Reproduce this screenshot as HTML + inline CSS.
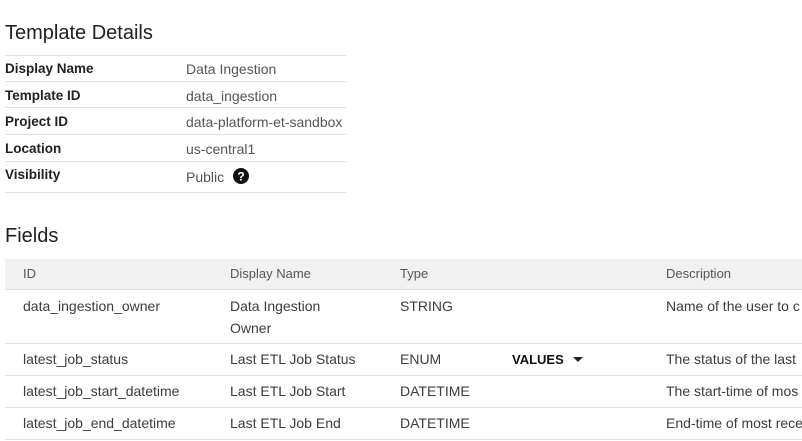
<!DOCTYPE html>
<html><head><style>
body{margin:0;width:802px;height:441px;overflow:hidden;background:#fff;font-family:"Liberation Sans",Arial,sans-serif;color:#212121;position:relative}
.a{position:absolute;white-space:nowrap}
h{position:absolute;font-size:20px;color:#212121}
.l{position:absolute;left:5px;width:341px;height:1px;background:#e0e0e0}
.k{font-size:13.5px;font-weight:bold;left:5px}
.v{font-size:14px;color:#555;left:186px}
.t{position:absolute;left:5px;width:797px;height:1px;background:#e0e0e0}
.c{font-size:14px;color:#3c3c3c}
.hd{font-size:13px;color:#555}
</style></head><body>
<h style="left:5px;top:22px">Template Details</h>
<div class="l" style="top:55px"></div>
<div class="l" style="top:81px"></div>
<div class="l" style="top:107px"></div>
<div class="l" style="top:134px"></div>
<div class="l" style="top:161px"></div>
<div class="l" style="top:192px"></div>
<div class="a k" style="top:61px">Display Name</div><div class="a v" style="top:61px">Data Ingestion</div>
<div class="a k" style="top:88px">Template ID</div><div class="a v" style="top:88px">data_ingestion</div>
<div class="a k" style="top:114px">Project ID</div><div class="a v" style="top:114px">data-platform-et-sandbox</div>
<div class="a k" style="top:141px">Location</div><div class="a v" style="top:141px">us-central1</div>
<div class="a k" style="top:167px">Visibility</div><div class="a v" style="top:169px">Public</div>
<svg class="a" style="left:233px;top:168px" width="16" height="16" viewBox="0 0 16 16"><circle cx="8" cy="8" r="8" fill="#111"/><text x="8" y="12.5" font-size="12" font-weight="bold" fill="#fff" text-anchor="middle" font-family="Liberation Sans">?</text></svg>
<h style="left:5px;top:225px">Fields</h>
<div class="a" style="left:5px;top:259px;width:797px;height:30px;background:#f1f1f1"></div>
<div class="t" style="top:289px"></div>
<div class="t" style="top:343px"></div>
<div class="t" style="top:375px"></div>
<div class="t" style="top:407px"></div>
<div class="t" style="top:439px"></div>
<div class="a hd" style="left:23px;top:266px">ID</div>
<div class="a hd" style="left:230px;top:266px">Display Name</div>
<div class="a hd" style="left:400px;top:266px">Type</div>
<div class="a hd" style="left:666px;top:266px">Description</div>
<div class="a c" style="left:23px;top:298px">data_ingestion_owner</div>
<div class="a c" style="left:230px;top:298px">Data Ingestion</div>
<div class="a c" style="left:230px;top:320px">Owner</div>
<div class="a c" style="left:400px;top:298px">STRING</div>
<div class="a c" style="left:666px;top:298px">Name of the user to c</div>
<div class="a c" style="left:23px;top:351px">latest_job_status</div>
<div class="a c" style="left:230px;top:351px">Last ETL Job Status</div>
<div class="a c" style="left:400px;top:351px">ENUM</div>
<div class="a" style="left:512px;top:352px;font-size:13px;font-weight:bold;color:#111">VALUES</div>
<svg class="a" style="left:573px;top:357px" width="10" height="6"><path d="M0 0L10 0L5 5Z" fill="#222"/></svg>
<div class="a c" style="left:666px;top:351px">The status of the last</div>
<div class="a c" style="left:23px;top:383px">latest_job_start_datetime</div>
<div class="a c" style="left:230px;top:383px">Last ETL Job Start</div>
<div class="a c" style="left:400px;top:383px">DATETIME</div>
<div class="a c" style="left:666px;top:383px">The start-time of mos</div>
<div class="a c" style="left:23px;top:415px">latest_job_end_datetime</div>
<div class="a c" style="left:230px;top:415px">Last ETL Job End</div>
<div class="a c" style="left:400px;top:415px">DATETIME</div>
<div class="a c" style="left:666px;top:415px">End-time of most rece</div>
</body></html>
